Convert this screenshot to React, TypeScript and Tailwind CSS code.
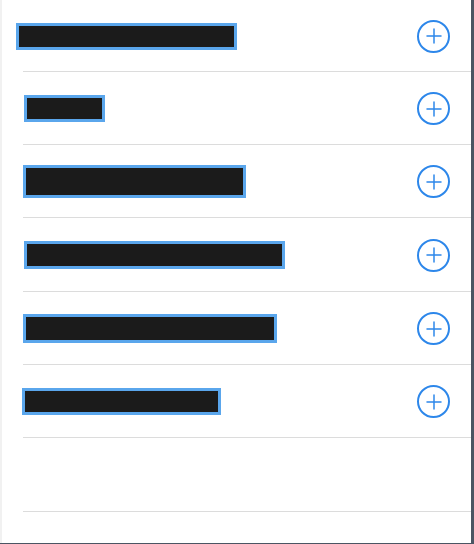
import { Plus } from "lucide-react";

type Item = { id: number; width: number; height: number; offset: number; rowHeight: number };

// Redacted entries: each label box has its own width/height/indent
const ITEMS: Item[] = [
  { id: 1, width: 221, height: 27, offset: 14, rowHeight: 72 },
  { id: 2, width: 81, height: 27, offset: 22, rowHeight: 73 },
  { id: 3, width: 223, height: 33, offset: 21, rowHeight: 73 },
  { id: 4, width: 261, height: 28, offset: 22, rowHeight: 74 },
  { id: 5, width: 254, height: 29, offset: 21, rowHeight: 73 },
  { id: 6, width: 199, height: 27, offset: 20, rowHeight: 73 },
];

function AddButton() {
  return (
    <button className="flex h-[33px] w-[33px] items-center justify-center rounded-full border-[2px] border-[#2d87ea] text-[#2d87ea]">
      <Plus className="h-[24px] w-[24px]" strokeWidth={1.5} />
    </button>
  );
}

function Row({ item }: { item: Item }) {
  return (
    <div className="relative flex items-center justify-between pr-[21px]" style={{ height: item.rowHeight }}>
      <div
        className="border-[3px] border-[#5aa6ec] bg-[#1b1b1b]"
        style={{ width: item.width, height: item.height, marginLeft: item.offset }}
      />
      <AddButton />
      <div className="absolute bottom-0 left-[21px] right-0 h-px bg-[#dcdcdc]" />
    </div>
  );
}

export default function App() {
  return (
    <div className="flex h-[544px] w-[474px] bg-[#4b5563]" style={{ fontFamily: "'Liberation Sans', sans-serif" }}>
      <div className="flex h-[543px] w-[471px] flex-col border-l-[2px] border-[#f1f1f1] bg-white">
        {ITEMS.map((item) => (
          <Row key={item.id} item={item} />
        ))}
        <div className="relative h-[74px]">
          <div className="absolute bottom-0 left-[21px] right-0 h-px bg-[#dcdcdc]" />
        </div>
        <div className="flex-1" />
      </div>
    </div>
  );
}
